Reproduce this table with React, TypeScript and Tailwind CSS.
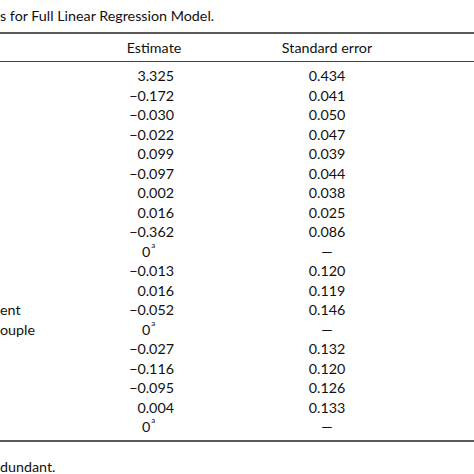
const rows: { label: string; est: string; se: string }[] = [
  { label: '', est: '3.325', se: '0.434' },
  { label: '', est: '−0.172', se: '0.041' },
  { label: '', est: '−0.030', se: '0.050' },
  { label: '', est: '−0.022', se: '0.047' },
  { label: '', est: '0.099', se: '0.039' },
  { label: '', est: '−0.097', se: '0.044' },
  { label: '', est: '0.002', se: '0.038' },
  { label: '', est: '0.016', se: '0.025' },
  { label: '', est: '−0.362', se: '0.086' },
  { label: '', est: '0a', se: '—' },
  { label: '', est: '−0.013', se: '0.120' },
  { label: '', est: '0.016', se: '0.119' },
  { label: 'ent', est: '−0.052', se: '0.146' },
  { label: 'ouple', est: '0a', se: '—' },
  { label: '', est: '−0.027', se: '0.132' },
  { label: '', est: '−0.116', se: '0.120' },
  { label: '', est: '−0.095', se: '0.126' },
  { label: '', est: '0.004', se: '0.133' },
  { label: '', est: '0a', se: '—' },
]

export default function App() {
  return (
    <div className="w-[474px] h-[474px] overflow-hidden bg-white text-[#111] font-['Lato','Liberation_Sans',sans-serif] text-[14.3px]">
      <div className="pt-[8px] leading-[16px]">s for Full Linear Regression Model.</div>
      <div className="mt-[8px] border-t-2 border-[#5a5a5a]" />
      <div className="grid grid-cols-[120px_68px_78px_122px] h-[27px] items-center">
        <div />
        <div className="text-center">Estimate</div>
        <div />
        <div className="text-center">Standard error</div>
      </div>
      <div className="border-t border-[#444]" />
      <div className="pt-[4px]">
        {rows.map((r, i) => (
          <div key={i} className="grid grid-cols-[120px_68px_78px_122px] h-[19.5px] items-center leading-[19.5px]">
            <div>{r.label}</div>
            <div className="flex justify-end pr-[14px]">
              {r.est === '0a' ? (
                <span className="w-[32px] text-left">
                  0<sup className="text-[8px] align-[5px] ml-[1px]">a</sup>
                </span>
              ) : (
                <span>{r.est}</span>
              )}
            </div>
            <div />
            <div className="text-center">{r.se}</div>
          </div>
        ))}
      </div>
      <div className="mt-[3px] border-t-2 border-[#5a5a5a]" />
      <div className="mt-[17px] leading-[16px]">dundant.</div>
    </div>
  )
}
